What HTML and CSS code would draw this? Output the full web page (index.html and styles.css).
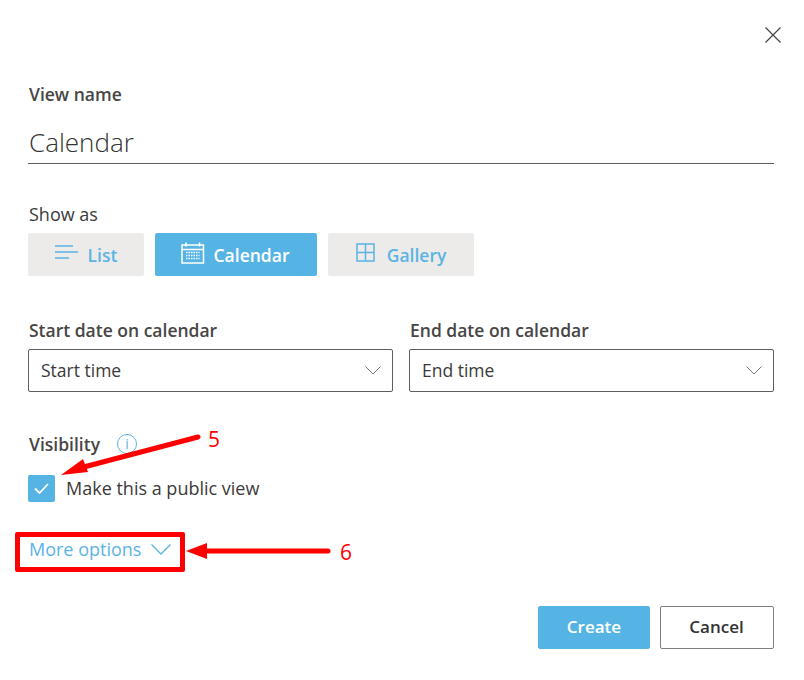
FILE: index.html
```html
<!DOCTYPE html>
<html>
    <head>
        <meta charset="UTF-8">
        <title>Create view</title>
        <link rel="stylesheet" href="styles.css">
    </head>
    <body>
        <div class="dialog">
            <div class="close-row">
                <svg class="close-icon" width="18" height="18" viewBox="0 0 18 18"><path d="M1.5 1.5 L16.5 16.5 M16.5 1.5 L1.5 16.5" /></svg>
            </div>

            <div class="label name-label">View name</div>
            <div class="name-input">Calendar</div>

            <div class="label show-label">Show as</div>
            <div class="view-types">
                <div class="view-btn list-btn">
                    <svg width="24" height="14" viewBox="0 0 24 14"><path d="M0 1 H18 M0 7 H23 M0 13 H14" /></svg>
                    <span>List</span>
                </div>
                <div class="view-btn calendar-btn active">
                    <svg width="24" height="22" viewBox="0 0 24 22">
                        <rect x="1" y="3" width="21.5" height="18" />
                        <path d="M1 7.5 H22.5 M5 0.5 V4.5 M18.5 0.5 V4.5" />
                        <path class="dots" d="M5 10.5 H18.5 M5 13.5 H18.5 M5 16.5 H18.5" />
                    </svg>
                    <span>Calendar</span>
                </div>
                <div class="view-btn gallery-btn">
                    <svg width="19" height="19" viewBox="0 0 19 19"><path d="M1 1 H18 V18 H1 Z M9.5 1 V18 M1 9.5 H18" /></svg>
                    <span>Gallery</span>
                </div>
            </div>

            <div class="date-fields">
                <div class="date-field">
                    <div class="label">Start date on calendar</div>
                    <div class="select-box">
                        <span>Start time</span>
                        <svg width="16" height="9" viewBox="0 0 16 9"><path d="M0.5 0.5 L8 8 L15.5 0.5" /></svg>
                    </div>
                </div>
                <div class="date-field">
                    <div class="label">End date on calendar</div>
                    <div class="select-box">
                        <span>End time</span>
                        <svg width="16" height="9" viewBox="0 0 16 9"><path d="M0.5 0.5 L8 8 L15.5 0.5" /></svg>
                    </div>
                </div>
            </div>

            <div class="visibility-row">
                <div class="label">Visibility</div>
                <div class="info-icon">i</div>
            </div>
            <div class="check-row">
                <div class="checkbox">
                    <svg width="15" height="11" viewBox="0 0 15 11"><path d="M1 5.5 L5.5 10 L14 1" /></svg>
                </div>
                <span>Make this a public view</span>
            </div>

            <div class="more-options">
                <span>More options</span>
                <svg width="20" height="11" viewBox="0 0 20 11"><path d="M0.5 0.5 L10 10 L19.5 0.5" /></svg>
            </div>

            <div class="actions">
                <div class="action-btn create-btn">Create</div>
                <div class="action-btn cancel-btn">Cancel</div>
            </div>

            <!-- annotations drawn on top of the screenshot -->
            <div class="highlight-box"></div>
            <svg class="arrows" width="804" height="680" viewBox="0 0 804 680">
                <path class="shaft" d="M198 437 L80 468" />
                <path class="head" d="M61 475 L83 459 L88 472 Z" />
                <path class="shaft" d="M328 551 L200 551" />
                <path class="head" d="M186 551 L207 543 L207 559 Z" />
            </svg>
            <span class="note note-five">5</span>
            <span class="note note-six">6</span>
        </div>
    </body>
</html>
```

FILE: styles.css
```css
body {
    font-family: 'Open Sans', 'Noto Sans', sans-serif;
    background-color: #fff;
    margin: 0;
    color: #333;
}
.dialog {
    position: relative;
    width: 804px;
    height: 680px;
    box-sizing: border-box;
    padding: 26px 30px 0 28px;
    overflow: hidden;
}
.close-row {
    display: flex;
    justify-content: flex-end;
    height: 18px;
    margin-right: -8px;
}
.close-icon path {
    fill: none;
    stroke: #444;
    stroke-width: 1.2;
}
.label {
    font-size: 17.5px;
    font-weight: 600;
    line-height: 22px;
    color: #484644;
    padding-left: 1px;
}
.name-label {
    margin-top: 39px;
}
.name-input {
    margin-top: 14px;
    height: 45px;
    box-sizing: border-box;
    border-bottom: 1px solid #605e5c;
    font-size: 26px;
    font-weight: 300;
    line-height: 46px;
    padding-left: 1px;
    color: #333;
}
.show-label {
    margin-top: 39px;
    font-weight: 400;
    font-size: 18px;
    color: #3b3a39;
}
.view-types {
    display: flex;
    gap: 11px;
    margin-top: 8px;
}
.view-btn {
    height: 43px;
    display: flex;
    align-items: center;
    justify-content: center;
    gap: 9px;
    border-radius: 2px;
    background-color: #edebe9;
    color: #5ab4e4;
    font-size: 17.5px;
    font-weight: 600;
}
.view-btn svg {
    fill: none;
    stroke: #5ab4e4;
    stroke-width: 1.5;
    margin-top: -5px;
}
.list-btn {
    width: 116px;
}
.calendar-btn {
    width: 162px;
    padding-right: 2px;
    box-sizing: border-box;
}
.gallery-btn {
    width: 146px;
    gap: 12px;
}
.view-btn.active {
    background-color: #56b4e4;
    color: #fff;
}
.view-btn.active svg {
    stroke: #fff;
    margin-top: -3px;
}
.view-btn .dots {
    stroke-dasharray: 1.5 1;
    stroke-width: 1.5;
}
.date-fields {
    display: flex;
    gap: 16px;
    margin-top: 43px;
}
.date-field {
    flex: 1;
}
.select-box {
    margin-top: 8px;
    height: 43px;
    box-sizing: border-box;
    display: flex;
    align-items: center;
    justify-content: space-between;
    padding: 0 11px 0 12px;
    border: 1px solid #605e5c;
    border-radius: 2px;
    font-size: 17.5px;
    color: #3b3a39;
}
.select-box span {
    margin-top: -2px;
}
.select-box svg path {
    fill: none;
    stroke: #777;
    stroke-width: 1;
}
.visibility-row {
    display: flex;
    align-items: center;
    gap: 17px;
    margin-top: 41px;
}
.info-icon {
    width: 20px;
    height: 20px;
    box-sizing: border-box;
    border: 1.5px solid #5ab4e4;
    border-radius: 50%;
    color: #5ab4e4;
    font-size: 14px;
    line-height: 17px;
    text-align: center;
}
.check-row {
    display: flex;
    align-items: center;
    gap: 11px;
    margin-top: 20px;
    font-size: 18px;
    color: #3b3a39;
}
.check-row span {
    margin-top: -2px;
}
.checkbox {
    width: 27px;
    height: 27px;
    display: flex;
    align-items: center;
    justify-content: center;
    border-radius: 2px;
    background-color: #56b4e4;
}
.checkbox path {
    fill: none;
    stroke: #fff;
    stroke-width: 1.8;
}
.more-options {
    display: flex;
    align-items: center;
    gap: 10px;
    margin-top: 34px;
    padding-left: 1px;
    height: 26px;
    font-size: 18px;
    color: #5ab4e4;
}
.more-options svg path {
    fill: none;
    stroke: #5ab4e4;
    stroke-width: 1.3;
}
.actions {
    display: flex;
    justify-content: flex-end;
    gap: 10px;
    margin-top: 44px;
}
.action-btn {
    height: 43px;
    box-sizing: border-box;
    border-radius: 2px;
    font-size: 17px;
    font-weight: 600;
    line-height: 40px;
    text-align: center;
}
.create-btn {
    width: 112px;
    background-color: #56b4e4;
    border: 1px solid #56b4e4;
    color: #fff;
}
.cancel-btn {
    width: 114px;
    padding-right: 1px;
    background-color: #fff;
    border: 1px solid #7f7f7f;
    color: #333;
}
.highlight-box {
    position: absolute;
    left: 15px;
    top: 532px;
    width: 170px;
    height: 40px;
    box-sizing: border-box;
    border: 5px solid #f00;
    border-radius: 2px;
}
.arrows {
    position: absolute;
    left: 0;
    top: 0;
}
.shaft {
    fill: none;
    stroke: #f00;
    stroke-width: 5;
    stroke-linecap: round;
}
.head {
    fill: #f00;
}
.note {
    position: absolute;
    font-family: 'Open Sans', sans-serif;
    font-size: 21px;
    line-height: 24px;
    color: #f00;
}
.note-five {
    left: 208px;
    top: 427px;
}
.note-six {
    left: 340px;
    top: 540px;
}
```
